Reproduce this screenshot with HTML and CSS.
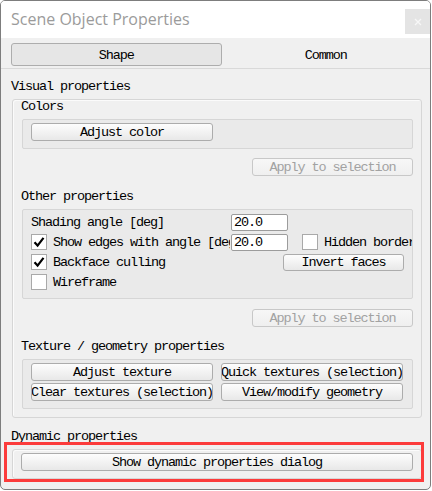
FILE: index.html
```html
<!DOCTYPE html>
<html>
<head>
<meta charset="utf-8">
<link rel="stylesheet" href="styles.css">
</head>
<body>
<div class="window">
  <div class="titlebar">
    <span class="title">Scene Object Properties</span>
    <div class="close">
      <svg width="8" height="8" viewBox="0 0 8 8"><path d="M1 1L7 7M7 1L1 7" stroke="#f7f7f7" stroke-width="1.2" fill="none"/></svg>
    </div>
  </div>
  <div class="tabs">
    <div class="tab active">Shape</div>
    <div class="tab">Common</div>
  </div>
  <div class="content">
    <div class="label top">Visual properties</div>
    <div class="group visual">
      <div class="sublabel first">Colors</div>
      <div class="box colors">
        <div class="btn half">Adjust color</div>
      </div>
      <div class="apply-row first-apply">
        <div class="btn apply">Apply to selection</div>
      </div>
      <div class="sublabel other">Other properties</div>
      <div class="box other-box">
        <div class="row">
          <span class="txt shading">Shading angle [deg]</span>
          <div class="num">20.0</div>
        </div>
        <div class="row">
          <div class="cb"><svg width="14" height="14" viewBox="0 0 14 14"><path d="M2.5 7.2L5.6 10.6L11.5 2.8" stroke="#000" stroke-width="2.2" fill="none"/></svg></div>
          <span class="txt edges">Show edges with angle [deg]</span>
          <div class="num">20.0</div>
          <div class="cb second"></div>
          <span class="txt free">Hidden border</span>
        </div>
        <div class="row">
          <div class="cb"><svg width="14" height="14" viewBox="0 0 14 14"><path d="M2.5 7.2L5.6 10.6L11.5 2.8" stroke="#000" stroke-width="2.2" fill="none"/></svg></div>
          <span class="txt free">Backface culling</span>
          <div class="btn invert">Invert faces</div>
        </div>
        <div class="row">
          <div class="cb"></div>
          <span class="txt free">Wireframe</span>
        </div>
      </div>
      <div class="apply-row second-apply">
        <div class="btn apply">Apply to selection</div>
      </div>
      <div class="sublabel texture-label">Texture / geometry properties</div>
      <div class="box texture">
        <div class="btn">Adjust texture</div>
        <div class="btn">Quick textures (selection)</div>
        <div class="btn">Clear textures (selection)</div>
        <div class="btn">View/modify geometry</div>
      </div>
    </div>
    <div class="label dyn">Dynamic properties</div>
    <div class="group dyn-group">
      <div class="btn">Show dynamic properties dialog</div>
    </div>
  </div>
  <div class="highlight"></div>
</div>
</body>
</html>
```

FILE: styles.css
```css
* { box-sizing: border-box; }

body {
  margin: 0;
  background: #ffffff;
  font-family: "Liberation Mono", "DejaVu Sans Mono", monospace;
  font-size: 13.5px;
  letter-spacing: -1.1px;
  color: #000;
}

.window {
  position: relative;
  width: 431px;
  height: 490px;
  border: 1px solid #7d7d7d;
  border-radius: 5px;
  background: #f0f0f0;
  overflow: hidden;
}

.titlebar {
  height: 37px;
  background: #ffffff;
  display: flex;
  align-items: flex-start;
  justify-content: space-between;
}

.title {
  font-family: "Open Sans", "Noto Sans", sans-serif;
  font-size: 16px;
  letter-spacing: 0;
  line-height: 20px;
  color: #9b9b9b;
  padding-left: 10px;
  margin-top: 8px;
}

.close {
  width: 25px;
  height: 25px;
  margin-top: 8px;
  background: #e4e4e4;
  display: flex;
  align-items: center;
  justify-content: center;
}

.tabs {
  display: flex;
  height: 31px;
  padding: 5px 0 2px 10px;
  border-bottom: 1px solid #d9d9d9;
}

.tab {
  flex: 1;
  height: 23px;
  display: flex;
  align-items: center;
  justify-content: center;
  padding-top: 1px;
}

.tab.active {
  background: #e6e6e6;
  border: 1px solid #adadad;
  border-radius: 3px;
}

.content {
  padding-left: 10px;
}

.label {
  height: 14px;
  line-height: 15px;
  white-space: nowrap;
}

.label.top { margin-top: 10px; }
.label.dyn { margin-top: 11px; }

.group {
  margin-left: 1px;
  width: 410px;
  border: 1px solid #d6d6d6;
  border-radius: 3px;
  box-shadow: inset 1px 1px 0 #fbfbfb;
}

.visual {
  margin-top: 6px;
  padding-bottom: 8px;
}

.sublabel {
  padding-left: 8px;
  height: 14px;
  line-height: 15px;
  white-space: nowrap;
}

.sublabel.first { height: 12px; line-height: 13px; }
.sublabel.other { margin-top: 13px; }
.sublabel.texture-label { margin-top: 12px; }

.box {
  margin-left: 9px;
  width: 391px;
  border: 1px solid #d6d6d6;
  border-radius: 2px;
  background: #eaeaea;
  padding: 3px 8px 7px 8px;
  overflow: hidden;
}

.box.colors { margin-top: 7px; }
.box.other-box {
  margin-top: 6px;
  display: flex;
  flex-direction: column;
  gap: 2px;
}
.box.texture {
  margin-top: 6px;
  display: grid;
  grid-template-columns: 182px 182px;
  column-gap: 8px;
  row-gap: 2px;
}

.apply-row {
  display: flex;
  justify-content: flex-end;
  padding-right: 8px;
}
.first-apply { margin-top: 9px; }
.second-apply { margin-top: 10px; }

.btn {
  height: 18px;
  border: 1px solid #acacac;
  border-radius: 3px;
  background: linear-gradient(#fdfdfd, #e8e8e8);
  display: flex;
  align-items: center;
  justify-content: center;
  line-height: 16px;
  white-space: nowrap;
  overflow: hidden;
  padding-top: 1px;
}

.btn.half { width: 182px; }

.btn.apply {
  width: 161px;
  color: #a2a2a2;
  border-color: #c8c8c8;
  background: linear-gradient(#f7f7f7, #efefef);
}

.btn.invert {
  width: 121px;
  height: 17px;
  margin-left: auto;
}

.row {
  display: flex;
  align-items: center;
  height: 18px;
}

.txt {
  white-space: nowrap;
  line-height: 15px;
}

.txt.shading { width: 200px; flex: none; }
.txt.edges { width: 177px; margin-right: 1px; flex: none; overflow: hidden; }
.txt.free { flex: none; }

.cb {
  width: 16px;
  height: 16px;
  flex: none;
  border: 1px solid #a9a9a9;
  background: #ffffff;
  margin-right: 6px;
  display: flex;
  align-items: center;
  justify-content: center;
}

.cb.second { margin-left: 14px; }

.num {
  width: 57px;
  height: 17px;
  flex: none;
  background: #ffffff;
  border: 1px solid #9c9c9c;
  border-radius: 2px;
  padding-left: 2px;
  line-height: 16px;
}

.dyn-group {
  margin-top: 6px;
  padding: 3px 8px 7px 8px;
}

.highlight {
  position: absolute;
  left: 3px;
  top: 441px;
  width: 420px;
  height: 40px;
  border: 3px solid #fc3b3b;
}
```
